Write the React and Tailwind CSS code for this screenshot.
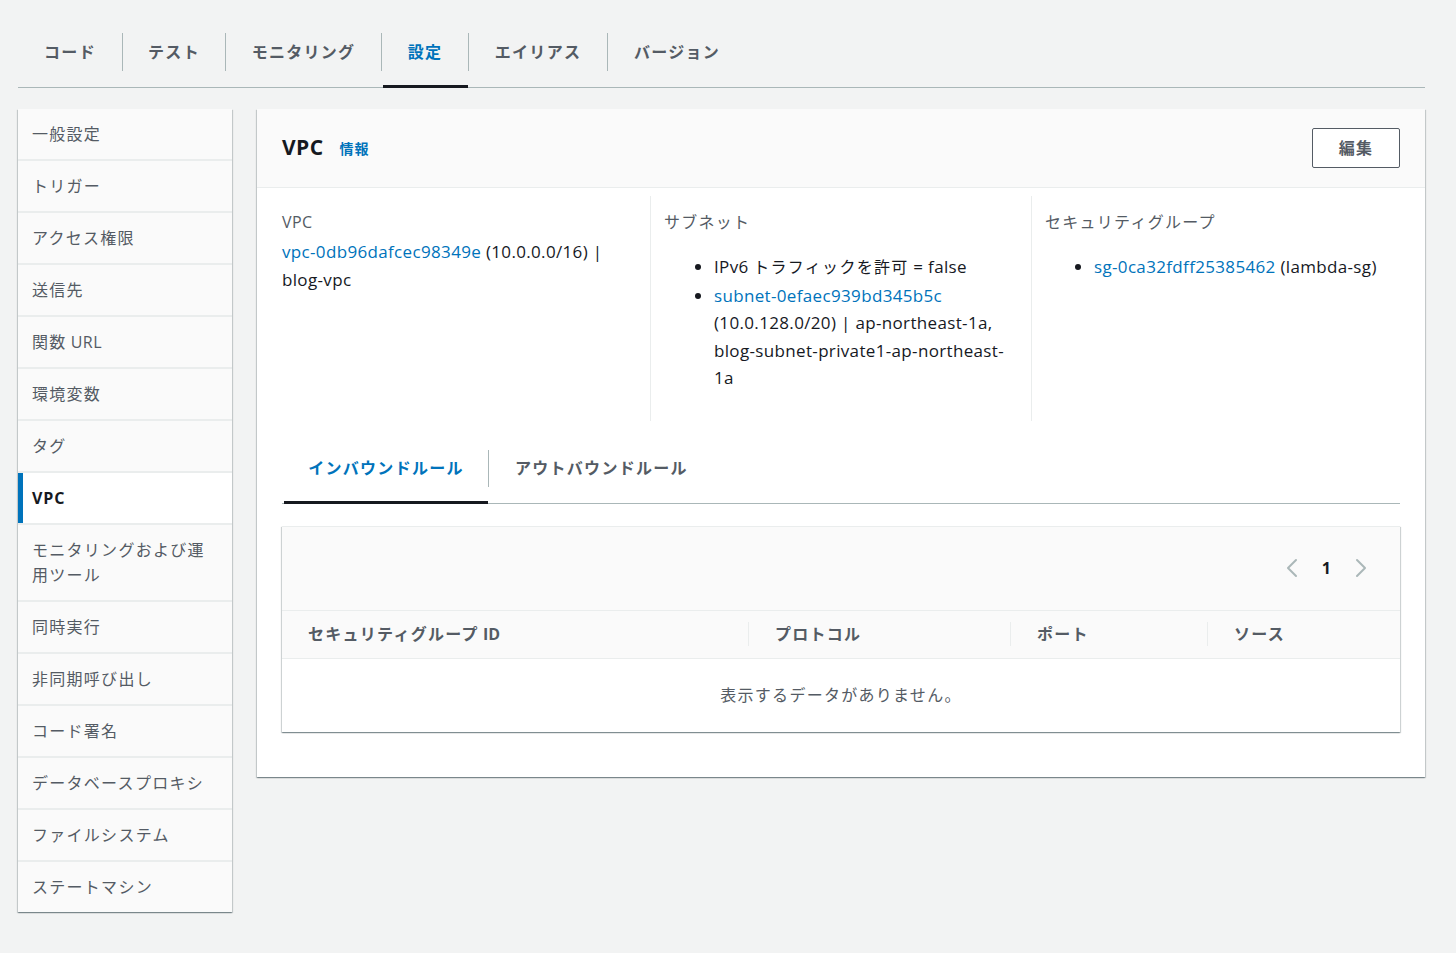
import React from 'react'

const J = ({ children, className = '' }) => <span className={`tracking-[0.08em] ${className}`}>{children}</span>

const topTabs = [
  { label: 'コード', w: 'w-[104px]' },
  { label: 'テスト', w: 'w-[103px]' },
  { label: 'モニタリング', w: 'w-[156px]' },
  { label: '設定', w: 'w-[87px]', active: true },
  { label: 'エイリアス', w: 'w-[139px]' },
  { label: 'バージョン', w: 'w-[139px]' },
]

const navItems = [
  '一般設定',
  'トリガー',
  'アクセス権限',
  '送信先',
  '関数 URL',
  '環境変数',
  'タグ',
  'VPC',
  'モニタリングおよび運用ツール',
  '同時実行',
  '非同期呼び出し',
  'コード署名',
  'データベースプロキシ',
  'ファイルシステム',
  'ステートマシン',
]

const cardShadow =
  'shadow-[0_1px_1px_0_rgba(0,28,36,0.3),1px_1px_1px_0_rgba(0,28,36,0.15),-1px_1px_1px_0_rgba(0,28,36,0.15)]'

// latin text in the value blocks runs a bit wider than CJK
const latin = 'text-[17px] tracking-[0.02em]'

function Chevron({ dir }) {
  return (
    <svg width="14" height="22" viewBox="0 0 14 22" fill="none">
      <polyline
        points={dir === 'left' ? '11,3 3,11 11,19' : '3,3 11,11 3,19'}
        stroke="#aab7b8"
        strokeWidth="2"
        strokeLinecap="round"
        strokeLinejoin="round"
      />
    </svg>
  )
}

function TopTabs() {
  return (
    <div className="flex border-b border-[#aab7b8]">
      {topTabs.map((t, i) => (
        <div key={t.label} className={`relative pb-[16px] ${t.w}`}>
          <div
            className={`h-[38px] flex items-center justify-center text-[16px] font-bold ${
              i > 0 ? 'border-l border-[#aab7b8]' : ''
            } ${t.active ? 'text-[#0073bb]' : 'text-[#545b64]'}`}
          >
            <J>{t.label}</J>
          </div>
          {t.active && <div className="absolute left-[2px] right-0 bottom-[-1px] h-[3px] bg-[#16191f]" />}
        </div>
      ))}
    </div>
  )
}

function SideNav() {
  return (
    <div className={`w-[214px] shrink-0 bg-[#fafafa] ${cardShadow} self-start`}>
      {navItems.map((item, i) => {
        const active = item === 'VPC'
        const last = i === navItems.length - 1
        return (
          <div
            key={item}
            className={`relative pl-[14px] pr-[16px] py-[12.5px] leading-[25px] text-[16px] ${
              last ? '' : 'border-b-2 border-[#eaeded]'
            } ${active ? 'bg-white font-bold text-[#16191f]' : 'text-[#545b64]'}`}
          >
            {active && <div className="absolute left-0 top-0 bottom-0 w-[5px] bg-[#0073bb]" />}
            {item === '関数 URL' ? (
              <>
                <J>関数</J> <span className="tracking-[0.03em]">URL</span>
              </>
            ) : active ? (
              <span className="tracking-[0.06em]">{item}</span>
            ) : (
              <J>{item}</J>
            )}
          </div>
        )
      })}
    </div>
  )
}

function Columns() {
  return (
    <div className="grid grid-cols-[368px_381px_1fr] pt-[8px]">
      <div className="pt-[14px] pb-[29px] pr-[20px]">
        <div className="text-[16px] leading-[24px] text-[#545b64] tracking-[0.03em]">VPC</div>
        <div className={`mt-[4px] leading-[28px] text-[#16191f] ${latin}`}>
          <span className="text-[#0073bb]">vpc-0db96dafcec98349e</span> (10.0.0.0/16) | blog-vpc
        </div>
      </div>
      <div className="border-l border-[#eaeded] pl-[13px] pt-[14px] pb-[29px] pr-[20px]">
        <div className="text-[16px] leading-[24px] text-[#545b64]">
          <J>サブネット</J>
        </div>
        <ul className={`mt-[19px] list-disc pl-[50px] leading-[27.5px] text-[#16191f] ${latin}`}>
          <li>
            IPv6 <J className="text-[16px]">トラフィックを許可</J> = false
          </li>
          <li>
            <span className="text-[#0073bb]">subnet-0efaec939bd345b5c</span> (10.0.128.0/20) | ap-northeast-1a,
            blog-subnet-private1-ap-northeast-1a
          </li>
        </ul>
      </div>
      <div className="border-l border-[#eaeded] pl-[13px] pt-[14px] pb-[29px]">
        <div className="text-[16px] leading-[24px] text-[#545b64]">
          <J>セキュリティグループ</J>
        </div>
        <ul className={`mt-[19px] list-disc pl-[49px] leading-[27.5px] text-[#16191f] ${latin}`}>
          <li>
            <span className="text-[#0073bb]">sg-0ca32fdff25385462</span> (lambda-sg)
          </li>
        </ul>
      </div>
    </div>
  )
}

function InnerTabs() {
  return (
    <div className="mt-[22px] flex border-b border-[#aab7b8]">
      <div className="relative ml-[2px] w-[204px] pt-[7px] pb-[16px]">
        <div className="h-[37px] flex items-center justify-center text-[16px] font-bold text-[#0073bb]">
          <J>インバウンドルール</J>
        </div>
        <div className="absolute left-0 right-0 bottom-[-1px] h-[3px] bg-[#16191f]" />
      </div>
      <div className="pt-[7px] pb-[16px]">
        <div className="h-[37px] flex items-center border-l border-[#aab7b8] pl-[26px] pr-[26px] text-[16px] font-bold text-[#545b64]">
          <J>アウトバウンドルール</J>
        </div>
      </div>
    </div>
  )
}

function RulesTable() {
  const cols = [
    { label: 'セキュリティグループ', suffix: 'ID', w: 'w-[466px]' },
    { label: 'プロトコル', w: 'w-[262px]' },
    { label: 'ポート', w: 'w-[197px]' },
    { label: 'ソース', w: 'flex-1' },
  ]
  return (
    <div className={`mt-[22px] bg-white border-t border-[#eaeded] ${cardShadow}`}>
      <div className="h-[84px] bg-[#fafafa] flex items-center justify-end pr-[32px] border-b border-[#eaeded]">
        <div className="flex items-center gap-[23px]">
          <Chevron dir="left" />
          <span className="text-[16px] font-bold text-[#16191f]">1</span>
          <Chevron dir="right" />
        </div>
      </div>
      <div className="h-[48px] bg-[#fafafa] flex border-b border-[#eaeded]">
        {cols.map((c, i) => (
          <div key={c.label} className={`${c.w} flex items-center`}>
            <div
              className={`h-[24px] flex items-center pl-[26px] text-[16px] font-bold text-[#545b64] ${
                i > 0 ? 'border-l border-[#eaeded]' : ''
              }`}
            >
              <span>
                <J>{c.label}</J>
                {c.suffix && <span className="ml-[4px]">{c.suffix}</span>}
              </span>
            </div>
          </div>
        ))}
      </div>
      <div className="h-[73px] flex items-center justify-center text-[16px] text-[#545b64]">
        <J>表示するデータがありません。</J>
      </div>
    </div>
  )
}

export default function App() {
  return (
    <div className="min-h-screen bg-[#f2f3f3] font-['Open_Sans','Noto_Sans_CJK_JP',sans-serif]">
      <div className="pt-[33px] pl-[18px] pr-[31px]">
        <TopTabs />
        <div className="mt-[21px] flex gap-[25px]">
          <SideNav />
          <div className={`flex-1 self-start bg-white ${cardShadow}`}>
            <div className="h-[79px] bg-[#fafafa] border-b border-[#eaeded] px-[25px] flex items-center justify-between">
              <div className="flex items-center">
                <span className="text-[21px] font-bold text-[#16191f] tracking-[0.02em]">VPC</span>
                <span className="ml-[16px] text-[14px] font-bold text-[#0073bb]">
                  <J>情報</J>
                </span>
              </div>
              <button className="w-[88px] h-[40px] border border-[#545b64] rounded-[2px] bg-white text-[16px] font-bold text-[#545b64]">
                <J>編集</J>
              </button>
            </div>
            <div className="px-[25px] pb-[45px]">
              <Columns />
              <InnerTabs />
              <RulesTable />
            </div>
          </div>
        </div>
      </div>
    </div>
  )
}
